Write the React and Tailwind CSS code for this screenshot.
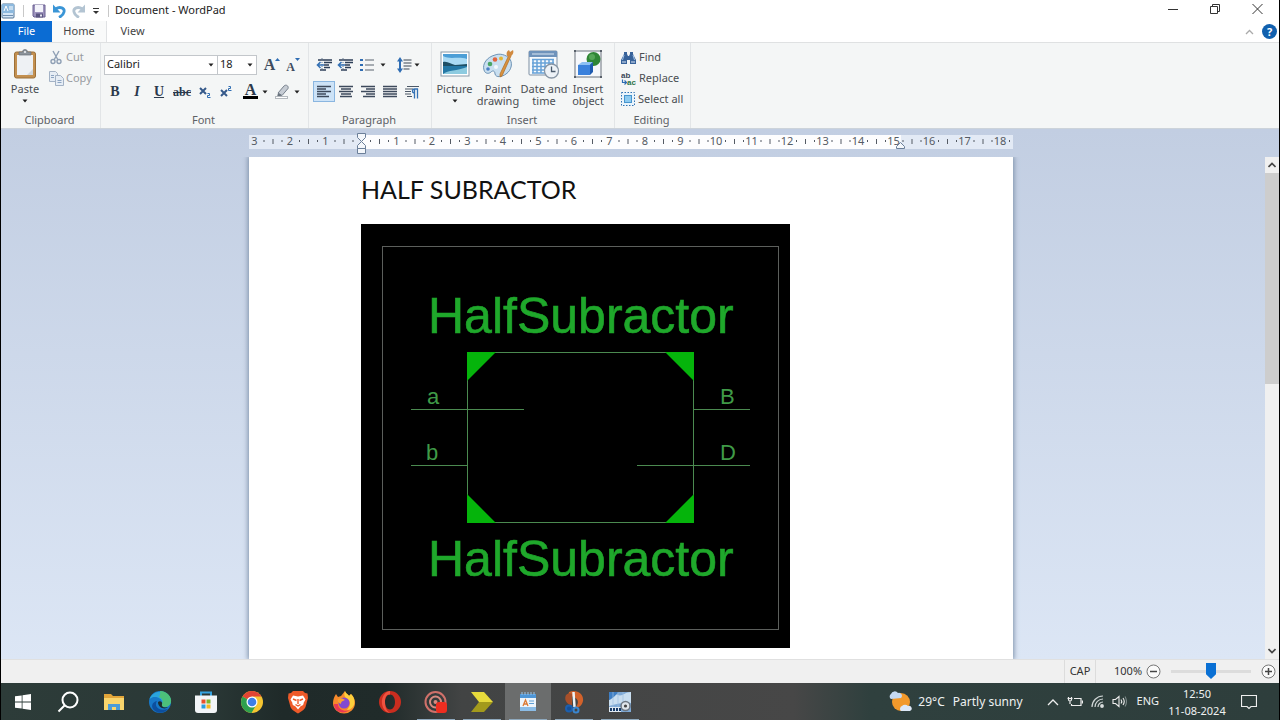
import React, { useState } from "react";

const Arrow = () => (
  <svg width="6" height="4" viewBox="0 0 6 4" className="shrink-0">
    <path d="M0.5 0.5h5L3 3.5z" fill="#222" />
  </svg>
);

const AppIcon = () => (
  <svg width="14" height="16" viewBox="0 0 14 16">
    <rect x="1" y="1" width="12" height="14" rx="1" fill="#d5e6f6" stroke="#4f7395" />
    <rect x="1" y="1" width="12" height="9" fill="#8db9de" />
    <path d="M3 8l2-5 2 5M8 4h4M8 6h4" stroke="#fff" fill="none" />
    <path d="M2 12.500h10" stroke="#6f8fb0" />
  </svg>
);

const SaveIcon = () => (
  <svg width="14" height="14" viewBox="0 0 14 14">
    <path d="M1 1h12v12H2l-1-1z" fill="#9d93bd" stroke="#6a6192" />
    <rect x="3" y="1" width="8" height="7" fill="#f3f3fa" />
    <rect x="4" y="9.500" width="7" height="4" fill="#5a5580" />
    <rect x="8" y="10.500" width="2" height="2" fill="#e8e8f2" />
  </svg>
);

const UndoIcon = ({ color }) => (
  <svg width="14" height="14" viewBox="0 0 14 14">
    <path d="M3.500 5C8 2 13 4 12 8c-.5 2.500-2 4-5 5.500" fill="none" stroke={color} strokeWidth="2.800" />
    <path d="M1 .5v8h7.500z" fill={color} />
  </svg>
);

const PasteIcon = () => (
  <svg width="26" height="30" viewBox="0 0 26 30">
    <rect x="2.500" y="3" width="21" height="26" rx="2" fill="#c39050" stroke="#9c7038" />
    <rect x="5" y="6" width="16" height="20" fill="#eef1f4" />
    <path d="M15 26l6-6v6z" fill="#cfd6dc" />
    <path d="M7 6V3h3.500a2.500 2.500 0 0 1 5 0H19v3z" fill="#8d949b" stroke="#696f76" strokeWidth=".7" />
    <circle cx="13" cy="3" r="1" fill="#f4f6f8" />
  </svg>
);

const CutIcon = () => (
  <svg width="14" height="15" viewBox="0 0 14 15" fill="none" stroke="#8fa0b5" strokeWidth="1.400">
    <path d="M4 1l5 9M10 1L5 10" />
    <circle cx="4" cy="11.500" r="2" />
    <circle cx="10" cy="11.500" r="2" />
  </svg>
);

const CopyIcon = () => (
  <svg width="15" height="15" viewBox="0 0 15 15" fill="#e6edf5" stroke="#a3b2c5">
    <path d="M.5 .5h6l2 2v8h-8z" />
    <path d="M6.500 4.500h5l3 3v7h-8z" />
    <path d="M8.500 9.500h4M8.500 11.500h4M2 4.500h3M2 6.500h3" stroke="#8ca4c2" />
  </svg>
);

const PenIcon = () => (
  <svg width="16" height="16" viewBox="0 0 16 16">
    <path d="M4 9l6-7c2-2 5 0 4 2.500l-6 7z" fill="#c6ccd4" stroke="#76808c" />
    <path d="M4 9l4 2.500-5 1.500z" fill="#69737e" />
    <rect x="1.500" y="12.500" width="12" height="2" fill="#fff" stroke="#b4b9be" />
  </svg>
);

const IndentIcon = () => (
  <svg width="16" height="14" viewBox="0 0 16 14" stroke="#2c3e57" strokeWidth="1.400">
    <path d="M2 2h14M8 4.500h8M8 7h5M8 9.500h6M4 12h6" />
    <path d="M6 0v14" stroke="#6d7f94" strokeDasharray="1 1" strokeWidth="1" />
    <path d="M8 7H2M4.500 4L1.500 7l3 3" stroke="#3572b5" strokeWidth="1.600" fill="none" />
  </svg>
);

const BulletsIcon = () => (
  <svg width="14" height="14" viewBox="0 0 14 14">
    <path d="M0 2h3M0 7h3M0 12h3" stroke="#2f6db3" strokeWidth="2" />
    <path d="M5 2h9M5 7h9M5 12h9" stroke="#59636f" strokeWidth="1.200" />
  </svg>
);

const SpacingIcon = () => (
  <svg width="15" height="16" viewBox="0 0 15 16">
    <path d="M3 0l3 4.500H4v7h2L3 16l-3-4.500h2v-7H0z" fill="#2f6db3" />
    <path d="M6.500 3h8M6.500 6h8M6.500 9h8M6.500 12h6" stroke="#3b4654" strokeWidth="1.200" />
  </svg>
);

const alignPaths = {
  left: "M0 1.500h14M0 4h9M0 6.500h14M0 9h9M0 11.500h12",
  center: "M0 1.500h14M2 4h10M0 6.500h14M2 9h10M1 11.500h12",
  right: "M0 1.500h14M5 4h9M0 6.500h14M5 9h9M2 11.500h12",
  justify: "M0 1.500h14M0 4h14M0 6.500h14M0 9h14M0 11.500h14",
};

const AlignIcon = ({ kind }) => (
  <svg width="14" height="13" viewBox="0 0 14 13">
    <path d={alignPaths[kind]} stroke="#3d4a5c" strokeWidth="1.300" />
  </svg>
);

const ParagraphIcon = () => (
  <svg width="14" height="14" viewBox="0 0 14 14">
    <path d="M2 1.500h12M0 4h8M0 6.500h6M0 9h6M2 11.500h5" stroke="#4c5867" strokeWidth="1.200" />
    <path d="M12.500 3.500v10M9.500 4v9.500M13 4H9.500a2 2 0 0 0 0 4" stroke="#3572b5" fill="none" strokeWidth="1.300" />
  </svg>
);

const PictureIcon = () => (
  <svg width="30" height="28" viewBox="0 0 30 28">
    <rect x="1" y="2" width="28" height="24" fill="#fff" stroke="#8a99a8" />
    <rect x="3" y="4" width="24" height="20" fill="#4c9ed6" />
    <path d="M3 6c7 4 15 0 24 3v7H3z" fill="#a9daf4" />
    <path d="M3 12c5-1 7 2 12 3 5 0 8-1 12-1v3H3z" fill="#1d4f66" />
    <path d="M3 16h24v8H3z" fill="#2478a6" />
    <path d="M3 24c5-4 14-3 24-7v7z" fill="#8dcbe0" />
  </svg>
);

const PaintIcon = () => (
  <svg width="32" height="30" viewBox="0 0 32 30">
    <path
      d="M13 6C5 8 0 15 2 21c1 4 5 4 7 2s4-1 4 2c1 4 7 3 11 0 6-4 7-12 3-16-3-3-9-5-14-3z"
      fill="#c9dff0"
      stroke="#6d93b5"
    />
    <circle cx="8" cy="15" r="2.300" fill="#4aa564" />
    <circle cx="13" cy="10.500" r="2.300" fill="#e2653f" />
    <circle cx="19" cy="9.500" r="2" fill="#e4b636" />
    <circle cx="6" cy="20" r="1.800" fill="#4a7fc4" />
    <circle cx="14" cy="18" r="2" fill="#f4f8fb" />
    <path d="M27 6l2 1-9 20-2 1v-3z" fill="#d99340" stroke="#ad6d27" strokeWidth=".7" />
    <path d="M25 7c-1-3 0-5 2-6l1 2 3-2c1 3 0 5-3 7z" fill="#d18a3f" />
  </svg>
);

const CalendarIcon = () => (
  <svg width="32" height="30" viewBox="0 0 32 30">
    <rect x="1" y="2" width="28" height="24" rx="1" fill="#f7fafd" stroke="#7d8fa3" />
    <rect x="1" y="2" width="28" height="6" fill="#6f93bb" />
    <path d="M4 5h22" stroke="#b7cbe0" strokeWidth="1.500" />
    <path
      d="M4 10.500h22M4 14h22M4 17.500h22M4 21h14M4 24h14M5 10v14M9 10v14M13 10v14M17 10v14M21 10v8M25 10v8"
      stroke="#67a2d8"
      strokeWidth="1.500"
    />
    <circle cx="23.500" cy="22" r="7" fill="#edf2f7" stroke="#8896a5" strokeWidth="1.300" />
    <path d="M23.500 17.500V22.500h4" stroke="#4b5b6d" fill="none" strokeWidth="1.300" />
  </svg>
);

const ObjectIcon = () => (
  <svg width="30" height="30" viewBox="0 0 30 30">
    <rect x="2" y="2" width="26" height="26" fill="#f6f8fb" stroke="#6b737c" />
    <circle cx="20.500" cy="10" r="7" fill="#2f8636" />
    <circle cx="19" cy="8" r="3" fill="#55a758" />
    <path d="M5 16l4-3h11l-3 3z" fill="#8cc0f4" />
    <path d="M5 16h12v10H5z" fill="#3a81dc" />
    <path d="M17 16l3-3v10l-3 3z" fill="#1f5bb0" />
    <path d="M1 1h2v2H1zM27 1h2v2h-2zM1 27h2v2H1zM27 27h2v2h-2z" fill="#59616b" />
  </svg>
);

const FindIcon = () => (
  <svg width="15" height="14" viewBox="0 0 15 14">
    <path d="M3 1h3v2l1 2h1l1-2V1h3v2l3 6v4H9V9H6v4H0V9l3-6z" fill="#38639a" />
    <path d="M3 4L1.500 9M12 4l1.500 5" stroke="#a3c3e6" />
    <path d="M1 11h4M10 11h4" stroke="#dbe8f6" strokeWidth="1.200" />
  </svg>
);

const ReplaceIcon = () => (
  <svg width="15" height="14" viewBox="0 0 15 14">
    <text x="0" y="6" fontSize="8" fontWeight="700" fill="#3a4656" fontFamily="Liberation Sans, sans-serif">ab</text>
    <text x="6" y="13" fontSize="8" fontWeight="700" fill="#2b7347" fontFamily="Liberation Sans, sans-serif">ac</text>
    <path d="M1.500 7.500v3H5M3.500 8.500l2 2-2 2" stroke="#2f6db3" fill="none" strokeWidth="1.200" />
  </svg>
);

const SelectAllIcon = () => (
  <svg width="14" height="14" viewBox="0 0 14 14">
    <rect x=".5" y=".5" width="13" height="13" fill="#e9f4fc" stroke="#3173b3" strokeDasharray="1.500 1.500" />
    <rect x="3.500" y="3.500" width="7" height="7" fill="#8ccaf0" stroke="#4795cd" />
  </svg>
);

const Group = ({ label, className, children }) => (
  <section className={`flex flex-col border-r border-[#e2e5e7] ${className}`} aria-label={label}>
    <div className="flex-1">{children}</div>
    <div className="h-4 pr-0.5 text-center leading-4 text-[#5d6166]">{label}</div>
  </section>
);

const IconButton = ({ label, className = "w-[22px]", children }) => (
  <button aria-label={label} className={`flex h-[21px] shrink-0 items-center justify-center ${className}`}>
    {children}
  </button>
);

const BigButton = ({ icon, label, arrow, className }) => (
  <button className={`flex shrink-0 flex-col items-center leading-3 ${className}`}>
    <span className="flex h-[34px] items-center pb-1">{icon}</span>
    <span>{label}</span>
    {arrow && (
      <span className="flex h-3 items-center">
        <Arrow />
      </span>
    )}
  </button>
);

const TitleBar = () => (
  <header className="flex h-[21px] items-center bg-white pr-3 text-[#222]">
    <AppIcon />
    <span className="mx-2 h-3 w-px bg-[#c8c8c8]" />
    <button aria-label="Save"><SaveIcon /></button>
    <button aria-label="Undo" className="ml-1.5"><UndoIcon color="#3a95d6" /></button>
    <button aria-label="Redo" className="ml-1.5 -scale-x-100"><UndoIcon color="#b3c4d2" /></button>
    <button aria-label="Customize Quick Access Toolbar" className="ml-1.5">
      <svg width="8" height="8" viewBox="0 0 8 8">
        <path d="M1 1.500h6" stroke="#333" />
        <path d="M1 4h6L4 7z" fill="#333" />
      </svg>
    </button>
    <span className="mr-1.5 ml-2 h-3 w-px bg-[#c8c8c8]" />
    <h1 className="whitespace-nowrap">Document - WordPad</h1>
    <div className="ml-auto flex items-center gap-8 pb-1">
      <button aria-label="Minimize">
        <svg width="10" height="10" viewBox="0 0 10 10"><path d="M0 5.500h10" stroke="#333" /></svg>
      </button>
      <button aria-label="Restore">
        <svg width="10" height="10" viewBox="0 0 10 10" fill="none" stroke="#333">
          <path d="M.5 2.500h7v7h-7zM2.500 2.500v-2h7v7h-2" />
        </svg>
      </button>
      <button aria-label="Close" className="pr-1">
        <svg width="11" height="10" viewBox="0 0 11 10"><path d="M.5 0l10 10M10.500 0l-10 10" stroke="#333" /></svg>
      </button>
    </div>
  </header>
);

const TabBar = () => (
  <nav className="flex h-[21px] items-stretch bg-white text-[#444]">
    <button className="w-[51px] bg-[#0b6cd3] text-white">File</button>
    <button className="w-[55px] border-r border-[#e0e2e4] bg-[#f9fafa]">Home</button>
    <button className="w-[51px]">View</button>
    <div className="ml-auto flex items-center gap-2 pr-0.5">
      <button aria-label="Minimize the Ribbon">
        <svg width="9" height="6" viewBox="0 0 9 6"><path d="M1 5l3.500-3.500L8 5" stroke="#aaa" fill="none" strokeWidth="1.300" /></svg>
      </button>
      <button aria-label="Help" className="h-[15px] w-[15px] rounded-full bg-[#1160ae] leading-[15px] font-bold text-white">
        ?
      </button>
    </div>
  </nav>
);

const Select = ({ label, options, value, onChange, className }) => (
  <label className={`relative block h-5 border border-[#c3c7cb] bg-white ${className}`}>
    <select
      aria-label={label}
      value={value}
      onChange={(e) => onChange(e.target.value)}
      className="block h-full w-full appearance-none bg-transparent pl-0.5 text-[#222] outline-none"
    >
      {options.map((o) => (
        <option key={o}>{o}</option>
      ))}
    </select>
    <span className="pointer-events-none absolute inset-y-0 right-[3px] flex items-center">
      <Arrow />
    </span>
  </label>
);

const Ribbon = () => {
  const [font, setFont] = useState("Calibri");
  const [size, setSize] = useState("18");

  return (
    <div className="flex h-[87px] border-t border-b border-t-[#dfe1e2] border-b-[#ccd3da] bg-[#f4f6f6] text-[#4a4e53]">
      <Group label="Clipboard" className="w-[100px]">
        <div className="flex items-start">
          <BigButton icon={<PasteIcon />} label="Paste" arrow className="w-12 pt-1.5" />
          <div className="flex flex-col pt-1 text-[#989ca1]">
            <button className="flex h-[21px] items-center gap-[3px]"><CutIcon />Cut</button>
            <button className="flex h-[21px] items-center gap-0.5"><CopyIcon />Copy</button>
          </div>
        </div>
      </Group>

      <Group label="Font" className="w-[208px]">
        <div className="flex items-center pt-[11px] pl-[3px]">
          <Select label="Font family" options={["Calibri", "Arial"]} value={font} onChange={setFont} className="w-[114px]" />
          <Select label="Font size" options={["18", "20"]} value={size} onChange={setSize} className="-ml-px w-10" />
          <IconButton label="Grow font" className="ml-1 w-[22px]">
            <span className="font-[Liberation_Serif,serif] text-base font-bold text-[#3d4c60]">A</span>
            <svg width="5" height="14" viewBox="0 0 5 14"><path d="M0 3h5L2.500 0z" fill="#2f6db3" /></svg>
          </IconButton>
          <IconButton label="Shrink font" className="w-5">
            <span className="pt-1 font-[Liberation_Serif,serif] text-xs font-bold text-[#3d4c60]">A</span>
            <svg width="5" height="14" viewBox="0 0 5 14"><path d="M0 0h5L2.500 3z" fill="#2f6db3" /></svg>
          </IconButton>
        </div>
        <div className="flex items-center pt-1.5 pl-[3px] font-[Liberation_Serif,serif] text-sm font-bold text-[#2b394c]">
          <IconButton label="Bold">B</IconButton>
          <IconButton label="Italic"><span className="italic">I</span></IconButton>
          <IconButton label="Underline"><span className="underline">U</span></IconButton>
          <IconButton label="Strikethrough" className="w-6"><span className="text-xs line-through">abc</span></IconButton>
          <IconButton label="Subscript" className="w-[21px]">
            <svg width="12" height="12" viewBox="0 0 12 12">
              <path d="M1 2l6 6M7 2L1 8" stroke="#35598a" strokeWidth="2" />
              <path d="M8.500 7.500h2v2h-2v2h3" stroke="#2f6db3" fill="none" />
            </svg>
          </IconButton>
          <IconButton label="Superscript" className="w-[21px]">
            <svg width="12" height="12" viewBox="0 0 12 12">
              <path d="M1 4l6 6M7 4l-6 6" stroke="#35598a" strokeWidth="2" />
              <path d="M8.500 .5h2v2h-2v2h3" stroke="#2f6db3" fill="none" />
            </svg>
          </IconButton>
          <IconButton label="Text color" className="ml-1 w-[31px] gap-1">
            <span className="flex flex-col items-center">
              <span className="text-base leading-3">A</span>
              <span className="h-[3px] w-[15px] bg-black" />
            </span>
            <Arrow />
          </IconButton>
          <IconButton label="Text highlight color" className="w-[31px] gap-1"><PenIcon /><Arrow /></IconButton>
        </div>
      </Group>

      <Group label="Paragraph" className="w-[123px]">
        <div className="flex items-center pt-[11px] pl-1">
          <IconButton label="Decrease indent"><IndentIcon /></IconButton>
          <IconButton label="Increase indent" className="w-5"><IndentIcon /></IconButton>
          <IconButton label="Start a list" className="w-9 gap-1.5"><BulletsIcon /><Arrow /></IconButton>
          <IconButton label="Line spacing" className="w-[34px] gap-0.5"><SpacingIcon /><Arrow /></IconButton>
        </div>
        <div className="flex items-center pt-1.5 pl-1">
          <IconButton label="Align left" className="w-[22px] border border-[#8ab6e0] bg-[#cde3f7]"><AlignIcon kind="left" /></IconButton>
          <IconButton label="Center"><AlignIcon kind="center" /></IconButton>
          <IconButton label="Align right"><AlignIcon kind="right" /></IconButton>
          <IconButton label="Justify"><AlignIcon kind="justify" /></IconButton>
          <IconButton label="Paragraph"><ParagraphIcon /></IconButton>
        </div>
      </Group>

      <Group label="Insert" className="w-[183px]">
        <div className="flex items-start pt-1.5">
          <BigButton icon={<PictureIcon />} label="Picture" arrow className="w-[45px]" />
          <BigButton icon={<PaintIcon />} label="Paint drawing" className="w-[42px]" />
          <BigButton icon={<CalendarIcon />} label="Date and time" className="w-[50px]" />
          <BigButton icon={<ObjectIcon />} label="Insert object" className="w-[38px]" />
        </div>
      </Group>

      <Group label="Editing" className="w-[76px]">
        <div className="flex flex-col pt-1 pl-1.5">
          <button className="flex h-[21px] items-center gap-[3px] whitespace-nowrap"><FindIcon />Find</button>
          <button className="flex h-[21px] items-center gap-[3px] whitespace-nowrap"><ReplaceIcon />Replace</button>
          <button className="flex h-5 items-center gap-[3px] whitespace-nowrap"><SelectAllIcon />Select all</button>
        </div>
      </Group>
    </div>
  );
};

// ruler units are centimetres, 0 sits at the left text margin
const CM = 35.5;
const ORIGIN = 112;
const marks = Array.from({ length: 22 }, (_, i) => i - 3);

const Ruler = () => (
  <svg width="764" height="24" viewBox="0 -4 764 24" className="shrink-0">
    <rect width="764" height="14" fill="#e3eaf5" />
    <rect x={ORIGIN} width="540" height="14" fill="#fdfdfe" />
    {marks.map((m) => {
      const x = ORIGIN + m * CM;
      return (
        <g key={m} fill="#555b64">
          {m !== 0 && (
            <text x={x} y="10" fontSize="11" textAnchor="middle">
              {Math.abs(m)}
            </text>
          )}
          <rect x={x + 9} y="5" width="1" height="2" />
          {m < 18 && <rect x={x + 18} y="4" width="1" height="5" />}
          {m < 18 && <rect x={x + 27} y="5" width="1" height="2" />}
        </g>
      );
    })}
    <g fill="#f4f7fb" stroke="#6b7f99">
      <path d="M108.500 -1.500h8v4l-4 4-4-4z" />
      <path d="M112.500 6.500l4 4v3h-8v-3zM108.500 13.500h8v5h-8z" />
      <path d="M651.500 7.500l4 4v2h-8v-2z" />
    </g>
  </svg>
);

const Schematic = () => (
  <svg
    width="429"
    height="424"
    viewBox="0 0 429 424"
    role="img"
    aria-label="HalfSubractor block symbol"
    fontFamily="Liberation Sans, Arial, sans-serif"
  >
    <rect width="429" height="424" fill="#000" />
    <rect x="21.500" y="22.500" width="396" height="383" fill="none" stroke="#5c5f5c" />
    <g fontSize="50" fill="#1fa82b" stroke="#1fa82b" strokeWidth=".6">
      <text x="67" y="109">HalfSubractor</text>
      <text x="67" y="352">HalfSubractor</text>
    </g>
    <g fontSize="22" fill="#3f9a47">
      <text x="66" y="180">a</text>
      <text x="65" y="236">b</text>
      <text x="359" y="180">B</text>
      <text x="359" y="236">D</text>
    </g>
    <rect x="106.500" y="128.500" width="226" height="170" fill="none" stroke="#4b8a50" />
    <path d="M50 185.500h113M332 185.500h57M50 241.500h56M276 241.500h113" stroke="#4b8a50" />
    <path
      d="M106 128h29l-29 29zM333 128h-29l29 29zM106 299h29l-29-29zM333 299h-29l29-29z"
      fill="#05b40b"
    />
  </svg>
);

const Workspace = () => (
  <div className="flex min-h-0 flex-1 flex-col bg-linear-to-b from-[#c2cee2] to-[#dce6f5]">
    <div className="flex h-7 shrink-0 justify-center pt-0.5 pr-[18px]">
      <Ruler />
    </div>
    <div className="flex min-h-0 flex-1">
      <main className="flex min-w-0 flex-1 justify-center overflow-hidden pr-1">
        <article className="w-[764px] bg-white pt-3 pl-28 text-black shadow-[0_0_5px_1px_#7c90a8]">
          <p className="pb-[15px] font-[Lato,sans-serif] text-[25px] leading-10 text-[#111]">HALF SUBRACTOR</p>
          <Schematic />
        </article>
      </main>
      <div className="flex w-[14px] flex-col items-center bg-[#f0f0f0]">
        <button aria-label="Scroll up" className="flex h-4 items-center">
          <svg width="8" height="6" viewBox="0 0 8 6"><path d="M.5 5L4 1.500 7.500 5" stroke="#444" fill="none" strokeWidth="1.600" /></svg>
        </button>
        <div className="h-[42%] w-full bg-[#cdcdcd]" />
        <button aria-label="Scroll down" className="mt-auto flex h-4 items-center">
          <svg width="8" height="6" viewBox="0 0 8 6"><path d="M.5 1L4 4.500 7.500 1" stroke="#444" fill="none" strokeWidth="1.600" /></svg>
        </button>
      </div>
    </div>
  </div>
);

const ZoomButton = ({ label, d }) => (
  <button aria-label={label}>
    <svg width="15" height="15" viewBox="0 0 15 15">
      <circle cx="7.500" cy="7.500" r="6.500" fill="#fafafa" stroke="#777" />
      <path d={d} stroke="#444" strokeWidth="1.500" />
    </svg>
  </button>
);

const StatusBar = () => {
  const [zoom, setZoom] = useState(50);

  return (
    <footer className="flex h-6 shrink-0 items-center justify-end border-t border-[#e0e0e0] bg-[#f0f0f0] pr-[3px] text-[#333]">
      <span className="flex h-full w-8 items-center justify-center border-x border-[#dcdcdc]">CAP</span>
      <span className="ml-[18px] w-8">100%</span>
      <ZoomButton label="Zoom out" d="M4 7.500h7" />
      <input
        type="range"
        aria-label="Zoom"
        value={zoom}
        onChange={(e) => setZoom(e.target.value)}
        className="mx-2.5 h-4 w-20 appearance-none bg-transparent [&::-webkit-slider-runnable-track]:h-[3px] [&::-webkit-slider-runnable-track]:bg-[#dcdcdc] [&::-webkit-slider-thumb]:-mt-[7px] [&::-webkit-slider-thumb]:h-4 [&::-webkit-slider-thumb]:w-2.5 [&::-webkit-slider-thumb]:appearance-none [&::-webkit-slider-thumb]:bg-[#0a70d4] [&::-webkit-slider-thumb]:[clip-path:polygon(0_0,100%_0,100%_70%,50%_100%,0_70%)]"
      />
      <ZoomButton label="Zoom in" d="M4 7.500h7M7.500 4v7" />
    </footer>
  );
};

const WindowsLogo = () => (
  <svg width="16" height="16" viewBox="0 0 16 16" fill="#fff">
    <path d="M0 2.300l6.700-.9v6.200H0zM7.500 1.300L16 0v7.600H7.500zM0 8.400h6.700v6.200L0 13.700zM7.500 8.400H16V16l-8.500-1.300z" />
  </svg>
);

const SearchIcon = () => (
  <svg width="22" height="22" viewBox="0 0 22 22" fill="none" stroke="#fff" strokeWidth="2">
    <circle cx="13" cy="9" r="7.500" />
    <path d="M8 14l-6.500 6.500" />
  </svg>
);

const FolderIcon = () => (
  <svg width="22" height="20" viewBox="0 0 22 20">
    <path d="M1 2h7l2 2h11v14H1z" fill="#e2a53a" />
    <path d="M1 6h20v12H1z" fill="#f8d46c" />
    <path d="M5 18v-6h12v6h-4v-3H9v3z" fill="#4a9bd8" />
  </svg>
);

const EdgeIcon = () => (
  <svg width="24" height="24" viewBox="0 0 24 24">
    <circle cx="12" cy="12" r="11" fill="#1778c8" />
    <path d="M1.500 9C4 1 16-1 21 6c4 6 1 11-4 11-3 0-4-1-3-3 2-5-7-10-12.500-5z" fill="#2ba5dc" />
    <path d="M12 1c8 0 12 7 11 11-1 4-4 5-6 5-3 0-4-1-3-3 2-4-1-6-3-7 2-3 1-5 1-6z" fill="#4cc07a" />
    <path d="M9 11c-3 4 0 11 11 8-3 4-9 5-13 2-5-4-3-9 2-10z" fill="#0d4f9e" />
    <path d="M10 12c2-2 5 0 4 2-1 3 2 4 6 3-3 3-10 1-10-5z" fill="#202d2c" />
  </svg>
);

const StoreIcon = () => (
  <svg width="24" height="24" viewBox="0 0 24 24">
    <path d="M7 6V2.500h10V6" fill="none" stroke="#35a3e0" strokeWidth="2" />
    <path d="M1 5.500h22V20a3 3 0 0 1-3 3H4a3 3 0 0 1-3-3z" fill="#f2f5f7" />
    <path d="M7.500 9.500h4v4h-4z" fill="#e8512c" />
    <path d="M12.500 9.500h4v4h-4z" fill="#7db52c" />
    <path d="M7.500 14.500h4v4h-4z" fill="#2a9de0" />
    <path d="M12.500 14.500h4v4h-4z" fill="#f4b823" />
  </svg>
);

const ChromeIcon = () => (
  <svg width="24" height="24" viewBox="0 0 24 24">
    <circle cx="12" cy="12" r="11" fill="#f5c531" />
    <path d="M12 12L2.500 6.500A11 11 0 0 1 21.500 6.500H12z" fill="#e14434" />
    <path d="M2.500 6.500A11 11 0 0 0 11.500 23l5-8.500L12 12z" fill="#2ea04f" />
    <circle cx="12" cy="12" r="5.500" fill="#fff" />
    <circle cx="12" cy="12" r="4.300" fill="#3c7ee8" />
  </svg>
);

const BraveIcon = () => (
  <svg width="22" height="24" viewBox="0 0 22 24">
    <path d="M6 1h10l2 2 2.500.5L21 8l-2.500 9c-1 3-5 5-7.500 6.500C8.500 22 4.500 20 3.500 17L1 8l.5-4.500L4 3z" fill="#ee5a29" />
    <path d="M6 5.500l5 1 5-1 2.500 4-2 3.500c1 2-3 3-3.500 4l-2 2.500-2-2.500C8.500 16 4.500 15 5.500 13l-2-3.500z" fill="#fff" />
    <path d="M6 9l3.500 1.500M16 9l-3.500 1.500M11 9v5M8.500 14.500l2.500 1.500 2.500-1.500" stroke="#ee5a29" strokeWidth="1.400" fill="none" />
  </svg>
);

const FirefoxIcon = () => (
  <svg width="24" height="24" viewBox="0 0 24 24">
    <path d="M4 4l2 3 3-1 4-5c1 3 3 3 4 5l2-2c3 3 4 6 4 9a11 10.500 0 0 1-22 0c0-3 1-6 3-9z" fill="#f7892b" />
    <path d="M13 1c1 3 3 3 4 5l2-2c3 3 4 6 3 11-2 4-5 5-7 5 5-6 3-10-1-12-2-2-2-4-1-7z" fill="#fdcf3c" />
    <path d="M2 14c0 8 9 11 16 6-5 2-12 0-12-6z" fill="#ea3855" />
    <circle cx="12" cy="13" r="5.500" fill="#8249cf" />
    <path d="M6 9c3-2 6 0 7 1-2 1-4 1-4 4-2-1-4-2-3-5z" fill="#f9a02f" />
  </svg>
);

const OperaIcon = () => (
  <svg width="24" height="24" viewBox="0 0 24 24">
    <path fillRule="evenodd" d="M12 1a11 11 0 1 0 0 22 11 11 0 0 0 0-22zm0 3.500c3 0 5 3.300 5 7.500s-2 7.500-5 7.500-5-3.300-5-7.500 2-7.500 5-7.500z" fill="#c92d1f" />
    <path d="M12 1c-3 0-9 4-8 13 1 6 5 9 9 9-4-1-6-5-6-11S9 4.500 12 4.500z" fill="#ef5340" />
  </svg>
);

const RecorderIcon = () => (
  <svg width="24" height="24" viewBox="0 0 24 24">
    <circle cx="11.500" cy="12" r="10" fill="none" stroke="#d0716a" strokeWidth="2" />
    <circle cx="11.500" cy="12" r="5.500" fill="none" stroke="#d88a80" strokeWidth="2" />
    <circle cx="11.500" cy="12" r="2" fill="#d88a80" />
    <rect x="12" y="12" width="11" height="11" rx="3" fill="#ee2d20" />
  </svg>
);

const IseIcon = () => (
  <svg width="24" height="22" viewBox="0 0 24 22">
    <path d="M1 1h13l9 10H9z" fill="#e6da3c" />
    <path d="M9 11h14l-9 10H1z" fill="#a39a1c" />
  </svg>
);

const WordPadIcon = () => (
  <svg width="18" height="20" viewBox="0 0 18 20">
    <rect x="1" y="2" width="16" height="17" fill="#eef5fb" />
    <path d="M1 2h16v4H1z" fill="#4f96d6" />
    <path d="M3 0v3M6 0v3M9 0v3M12 0v3M15 0v3" stroke="#9cc6ea" />
    <path d="M4 14l2.500-6L9 14M5 12h3" stroke="#db7a35" fill="none" strokeWidth="1.300" />
    <path d="M10 9h5M10 11.500h5" stroke="#5f9fd6" />
    <path d="M1 15h16v4H1z" fill="#8bbce6" />
  </svg>
);

const SnipIcon = () => (
  <svg width="22" height="24" viewBox="0 0 22 24">
    <path d="M6 2c8-3 15 2 14 9-1 5-5 7-8 7 4-4 4-9-1-11-2-1-4-1-6 0z" fill="#d2622b" />
    <path d="M3 5c2-2 5-2 6-1v11H7C3 13 1 9 3 5z" fill="#a8502a" />
    <path d="M10.500 2l1 15" stroke="#eef2f5" strokeWidth="2.500" />
    <circle cx="6" cy="18.500" r="3" fill="#174f94" stroke="#1c5fae" strokeWidth="2" />
    <circle cx="13" cy="20" r="2.500" fill="none" stroke="#3a86d0" strokeWidth="2" />
  </svg>
);

const SimIcon = () => (
  <svg width="24" height="22" viewBox="0 0 24 22">
    <rect x="1" y="1" width="22" height="20" fill="#7ea9d6" />
    <path d="M1 15V9c3-2 5-7 9-5s7-3 13-3v11c-8-1-14 1-22 3z" fill="#c9def0" />
    <path d="M1 1h10C8 3 5 8 1 9z" fill="#3f7fc4" />
    <path d="M5 1v16M10 1v16M15 1v10" stroke="#9fbfe0" strokeWidth=".7" />
    <path d="M1 16h12v5H1z" fill="#dfe9f3" />
    <path d="M2 18.500h11" stroke="#173a66" strokeWidth="3" strokeDasharray="2 1" />
    <circle cx="17.500" cy="15" r="4.500" fill="#dfe5ea" stroke="#6d7782" strokeWidth="1.500" />
    <circle cx="17.500" cy="15" r="1.600" fill="#444" />
  </svg>
);

const WeatherIcon = () => (
  <svg width="24" height="22" viewBox="0 0 24 22">
    <circle cx="13" cy="11" r="9" fill="#f2992b" />
    <path d="M3 8a3 3 0 0 1 0-5 4 4 0 0 1 7-1 3 3 0 0 1 3 5z" fill="#c5d9f2" />
    <path d="M13 20a3 3 0 0 1 1-5 4 4 0 0 1 6 0 2.500 2.500 0 0 1 2 5z" fill="#dce8f7" />
  </svg>
);

const apps = [
  { name: "Search", icon: <SearchIcon /> },
  { name: "File Explorer", icon: <FolderIcon /> },
  { name: "Edge", icon: <EdgeIcon /> },
  { name: "Store", icon: <StoreIcon /> },
  { name: "Chrome", icon: <ChromeIcon /> },
  { name: "Brave", icon: <BraveIcon /> },
  { name: "Firefox", icon: <FirefoxIcon /> },
  { name: "Opera", icon: <OperaIcon /> },
  { name: "Recorder", icon: <RecorderIcon />, running: true },
  { name: "ISE Design Suite", icon: <IseIcon />, running: true },
  { name: "WordPad", icon: <WordPadIcon />, running: true, active: true },
  { name: "Snipping Tool", icon: <SnipIcon />, running: true },
  { name: "ISim", icon: <SimIcon />, running: true },
];

const Taskbar = () => (
  <div className="flex h-[37px] shrink-0 items-stretch bg-[linear-gradient(90deg,#2d3c39_0%,#2a3836_16%,#1f2a29_22%,#202b2a_30%,#424444_36%,#474747_62%,#2f403e_68%,#2e3e3c_100%)] text-xs text-[#eef1f1]">
    <button aria-label="Start" className="flex w-11 items-center justify-center"><WindowsLogo /></button>
    {apps.map((app) => (
      <button
        key={app.name}
        aria-label={app.name}
        className={`relative flex w-[46px] items-center justify-center ${app.active ? "bg-[#6b6d6d]" : ""}`}
      >
        {app.icon}
        {app.running && <span className="absolute inset-x-1 bottom-0 h-px bg-[#8fa9bd]" />}
      </button>
    ))}
    <button className="ml-auto flex items-center whitespace-nowrap">
      <WeatherIcon />
      <span className="ml-1.5">29°C</span>
      <span className="ml-2">Partly sunny</span>
    </button>
    <div className="ml-6 flex items-center gap-2">
      <button aria-label="Show hidden icons">
        <svg width="12" height="8" viewBox="0 0 12 8"><path d="M1 7l5-5 5 5" stroke="#eee" fill="none" strokeWidth="1.300" /></svg>
      </button>
      <svg width="16" height="12" viewBox="0 0 16 12" fill="none" stroke="#eee" strokeWidth="1.200" role="img" aria-label="Battery">
        <path d="M7 2.500h7v7H4.500V8M15.500 4.500v3" />
        <path d="M1.500 1v2.500a1.500 1.500 0 0 0 3 0V1M.5 2.500h5M3 5v3" />
      </svg>
      <svg width="13" height="13" viewBox="0 0 13 13" fill="none" stroke="#cfd5d5" strokeWidth="1.200" role="img" aria-label="Network">
        <path d="M1 12A11 11 0 0 1 12 1M4 12a8 8 0 0 1 8-8M7 12a5 5 0 0 1 5-5" />
        <circle cx="11" cy="11" r="1.300" fill="#eee" />
      </svg>
      <svg width="15" height="13" viewBox="0 0 15 13" fill="none" stroke="#eee" strokeWidth="1.100" role="img" aria-label="Volume">
        <path d="M1 4.500h2.500L7 1.500v10L3.500 8.500H1z" />
        <path d="M9 4.500q1.500 2 0 4M11 3q2.500 3.500 0 7" />
        <path d="M13 1.500q3 5 0 10" stroke="#7c8988" />
      </svg>
      <span className="ml-0.5 text-[11px]">ENG</span>
    </div>
    <button className="ml-2 flex w-[60px] flex-col items-center justify-center text-[11px] leading-[17px]">
      <span>12:50</span>
      <span className="whitespace-nowrap">11-08-2024</span>
    </button>
    <button aria-label="Notifications" className="mr-[22px] ml-3.5 flex items-center">
      <svg width="16" height="16" viewBox="0 0 16 16"><path d="M.5 1.500h15v11H10l-2 2-2-2H.500z" fill="none" stroke="#eee" strokeWidth="1.200" /></svg>
    </button>
  </div>
);

export default function App() {
  return (
    <div className="flex h-screen flex-col overflow-hidden border-x border-black font-['Noto_Sans',sans-serif] text-[11px]">
      <TitleBar />
      <TabBar />
      <Ribbon />
      <Workspace />
      <StatusBar />
      <Taskbar />
    </div>
  );
}
